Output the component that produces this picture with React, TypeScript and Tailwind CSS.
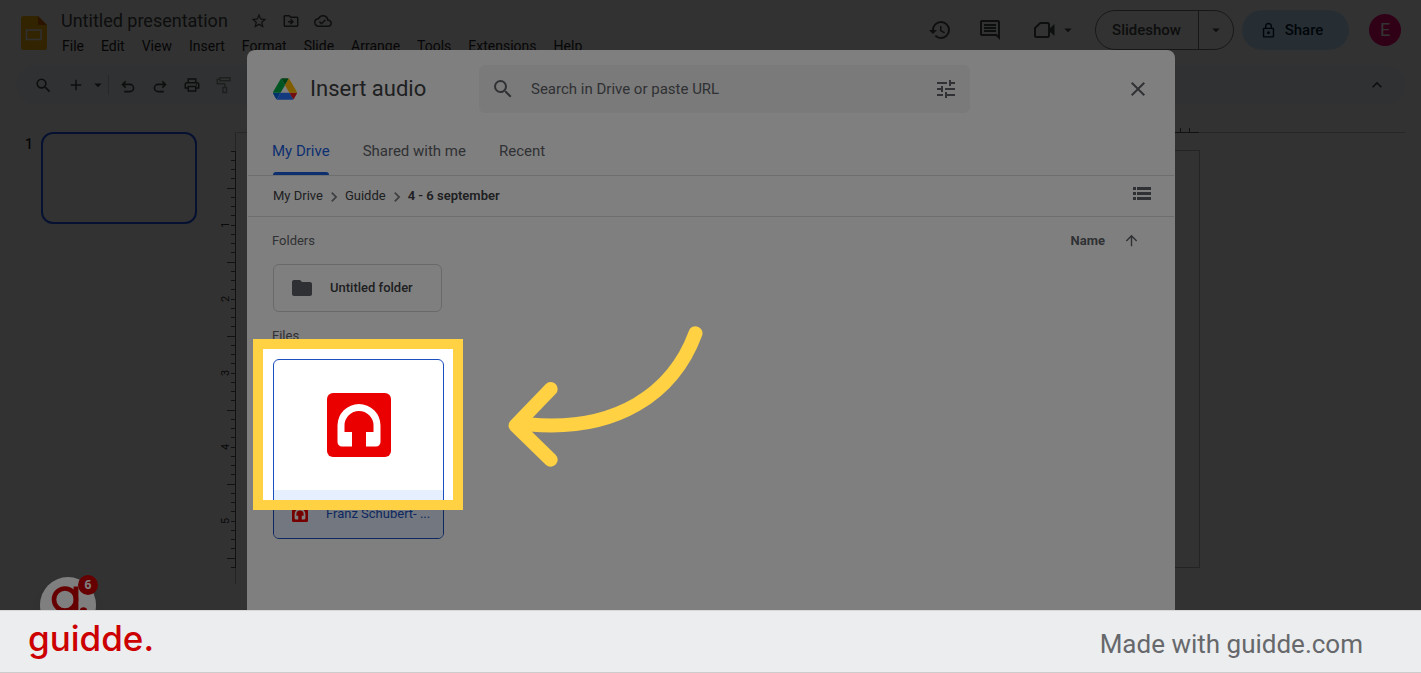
import React from "react";
import {
  MdAdd,
  MdArrowDropDown,
  MdArrowUpward,
  MdChevronRight,
  MdClose,
  MdFolder,
  MdHistory,
  MdKeyboardArrowUp,
  MdOutlineCloudDone,
  MdOutlineDriveFileMove,
  MdOutlineInsertComment,
  MdOutlineLock,
  MdOutlinePrint,
  MdSearch,
  MdStarBorder,
  MdTune,
} from "react-icons/md";

const menus = ["File", "Edit", "View", "Insert", "Format", "Slide", "Arrange", "Tools", "Extensions", "Help"];

function SlidesLogo() {
  return (
    <svg width="26" height="34" viewBox="0 0 26 34" aria-hidden="true">
      <path d="M2.500 0H17l9 9v22.500a2.500 2.500 0 0 1-2.500 2.500h-21A2.500 2.500 0 0 1 0 31.500v-29A2.500 2.500 0 0 1 2.500 0z" fill="#f9b300" />
      <path d="M17 0l9 9h-9z" fill="#d96b00" />
      <rect x="5.500" y="14" width="14.500" height="9.500" fill="none" stroke="#f1f1f1" strokeWidth="1.600" />
    </svg>
  );
}

function DriveLogo() {
  return (
    <svg width="24" height="22" viewBox="0 0 87.3 78" aria-hidden="true">
      <path d="m6.600 66.850 3.850 6.650c.8 1.400 1.950 2.500 3.300 3.300l13.750-23.800h-27.500c0 1.550.4 3.100 1.200 4.500z" fill="#0066da" />
      <path d="m43.650 25-13.750-23.800c-1.350.8-2.500 1.900-3.300 3.300l-25.400 44a9.060 9.060 0 0 0-1.200 4.500h27.500z" fill="#00ac47" />
      <path d="m73.550 76.800c1.350-.8 2.500-1.900 3.300-3.300l1.600-2.750 7.650-13.250c.8-1.400 1.200-2.950 1.200-4.500h-27.502l5.852 11.500z" fill="#ea1a20" />
      <path d="m43.650 25 13.750-23.800c-1.350-.8-2.900-1.200-4.500-1.200h-18.500c-1.600 0-3.150.45-4.500 1.200z" fill="#00832d" />
      <path d="m59.800 53h-32.300l-13.750 23.800c1.350.8 2.900 1.200 4.500 1.200h50.800c1.600 0 3.150-.45 4.500-1.200z" fill="#2674fc" />
      <path d="m73.400 26.500-12.700-22c-.8-1.400-1.950-2.500-3.300-3.300l-13.750 23.800 16.150 28h27.450c0-1.550-.4-3.100-1.200-4.500z" fill="#ffba00" />
    </svg>
  );
}

function UndoIcon({ flip = false }: { flip?: boolean }) {
  return (
    <svg
      width="14"
      height="14"
      viewBox="0 0 14 14"
      fill="none"
      stroke="currentColor"
      strokeWidth="1.600"
      className={flip ? "-scale-x-100" : ""}
      aria-hidden="true"
    >
      <path d="M4.700 1.200 1.500 4.400l3.200 3.200M1.700 4.400H9a3.600 3.600 0 0 1 0 7.200H3.200" />
    </svg>
  );
}

function PaintIcon() {
  return (
    <svg width="16" height="18" viewBox="0 0 16 18" fill="none" stroke="currentColor" strokeWidth="1.500" aria-hidden="true">
      <path d="M4 1.700h10v3H4zM4 3.200H1.200v4.600h7.600v3.400M7 11.500h3.500v5H7z" />
    </svg>
  );
}

function CameraIcon() {
  return (
    <svg width="21" height="18" viewBox="0 0 21 18" aria-hidden="true">
      <path d="M6.300 2H13.500Q15 2 15 3.500V14.500Q15 16 13.500 16H2.500Q1 16 1 14.500V7z" fill="none" stroke="currentColor" strokeWidth="2" strokeLinejoin="round" />
      <path d="M15.500 7.500 20.500 3v12l-5-4.500z" fill="currentColor" />
    </svg>
  );
}

function ListIcon() {
  return (
    <svg width="18" height="14" viewBox="0 0 18 14" fill="currentColor" aria-hidden="true">
      <path d="M0 0h3v3H0zM4 0h14v3H4zM0 5h3v3H0zM4 5h14v3H4zM0 10h3v3H0zM4 10h14v3H4z" />
    </svg>
  );
}

function AudioIcon({ size }: { size: number }) {
  return (
    <svg width={size} height={size} viewBox="0 0 64 64" aria-hidden="true">
      <rect width="64" height="64" rx="6" fill="#eb0000" />
      <path
        d="M10.500 32.500a21.500 21.500 0 0 1 43 0V49a4.500 4.500 0 0 1-4.500 4.500H39V39h7.500v-6.500a14.500 14.500 0 0 0-29 0V39H25v14.500H15a4.500 4.500 0 0 1-4.500-4.500z"
        fill="#fff"
      />
    </svg>
  );
}

function GuiddeEmblem() {
  return (
    <svg width="56" height="56" viewBox="0 0 56 56" fill="#cc0000" aria-hidden="true">
      <circle cx="25" cy="22.500" r="11" fill="none" stroke="#cc0000" strokeWidth="4.600" />
      <rect x="33.600" y="9.500" width="4.800" height="30" />
      <circle cx="43.500" cy="33.800" r="3.600" />
    </svg>
  );
}

function VerticalRuler() {
  const ticks = Array.from({ length: 46 }, (_, i) => i);
  return (
    <svg width="24" height="452" viewBox="0 0 24 452" className="shrink-0" aria-hidden="true">
      <path d="M22.500 0V452" stroke="#b4b4b4" />
      <path d="M22.500 19V435" stroke="#555" />
      {ticks.map((i) => {
        const y = Math.round(18.5 + i * 9.25) + 0.5;
        return <path key={i} d={i % 8 === 4 ? `M14 ${y}H23` : `M18 ${y}H23`} stroke="#555" />;
      })}
      {[1, 2, 3, 4, 5].map((n) => (
        <text
          key={n}
          x="12"
          y={19 + n * 74}
          fontSize="11"
          textAnchor="middle"
          dominantBaseline="central"
          fill="#333"
          transform={`rotate(-90 12 ${19 + n * 74})`}
        >
          {n}
        </text>
      ))}
    </svg>
  );
}

function Editor() {
  return (
    <div className="flex h-full flex-col bg-[#fbfbfb] text-[#2a2a2a]">
      <header className="flex h-[65px] items-start pt-2">
        <div className="ml-[21px] mt-2">
          <SlidesLogo />
        </div>
        <div className="ml-[14px]">
          <div className="flex h-[26px] items-center text-[#444746]">
            <h1 className="text-lg leading-6">Untitled presentation</h1>
            <button aria-label="Star" className="ml-[22px]"><MdStarBorder size={18} /></button>
            <button aria-label="Move" className="ml-[14px]"><MdOutlineDriveFileMove size={18} /></button>
            <button aria-label="Saved to Drive" className="ml-[14px]"><MdOutlineCloudDone size={18} /></button>
          </div>
          <nav className="flex h-6 items-center gap-[17px] pl-px text-sm text-[#1f1f1f]">
            {menus.map((m) => (
              <button key={m}>{m}</button>
            ))}
          </nav>
        </div>
        <div className="-mt-2 ml-auto flex h-[60px] items-center pr-5 text-[#444746]">
          <button aria-label="Version history"><MdHistory size={24} /></button>
          <button aria-label="Comments" className="ml-[26px]"><MdOutlineInsertComment size={24} /></button>
          <button aria-label="Video call" className="ml-8 flex items-center gap-1">
            <CameraIcon />
            <MdArrowDropDown size={18} />
          </button>
          <div className="ml-[18px] flex h-10 items-stretch rounded-full border border-[#747775]">
            <button className="pl-4 pr-[17px] text-[15px] font-medium">Slideshow</button>
            <button aria-label="Slideshow options" className="flex w-[35px] items-center justify-center border-l border-[#747775]">
              <MdArrowDropDown size={18} />
            </button>
          </div>
          <button className="ml-2 flex h-10 w-[107px] items-center justify-center gap-2 rounded-full bg-[#c2e7ff] pr-2 text-[15px] font-medium text-[#001d35]">
            <MdOutlineLock size={17} />
            Share
          </button>
          <div className="ml-5 flex size-8 items-center justify-center rounded-full bg-[#f00070] text-lg text-white">E</div>
        </div>
      </header>

      <div className="mx-4 flex h-10 shrink-0 items-center rounded-full bg-[#f0f4f9] text-[#444746]">
        <button aria-label="Search menus" className="ml-[18px]"><MdSearch size={19} /></button>
        <button aria-label="New slide" className="ml-[14px]"><MdAdd size={18} /></button>
        <button aria-label="New slide layout" className="ml-1"><MdArrowDropDown size={18} /></button>
        <div className="ml-px h-5 w-px bg-[#c7c7c7]" />
        <button aria-label="Undo" className="ml-3 mt-1"><UndoIcon /></button>
        <button aria-label="Redo" className="ml-[18px] mt-1"><UndoIcon flip /></button>
        <button aria-label="Print" className="ml-4"><MdOutlinePrint size={18} /></button>
        <button aria-label="Paint format" className="ml-[15px] text-[#999]"><PaintIcon /></button>
        <button aria-label="Hide the menus" className="ml-auto mr-[18px]"><MdKeyboardArrowUp size={20} /></button>
      </div>

      <div className="mt-[27px] flex flex-1 items-start">
        <aside className="flex w-[213px] shrink-0 gap-2 pl-[25px]">
          <span className="w-2 pt-[2px] text-sm font-medium leading-5 text-[#1f1f1f]">1</span>
          <div className="h-[92px] w-[156px] rounded-xl border-2 border-[#1f55f5]" />
        </aside>
        <VerticalRuler />
        <main className="relative mr-4 flex-1 border-t border-[#c4c4c4] pt-[17px]">
          <svg width="964" height="6" viewBox="0 0 964 6" className="absolute -top-[5px] left-0" aria-hidden="true">
            <path d="M221 4.500H962M943.500 0V4M952.500 0V4" stroke="#555" />
          </svg>
          <div className="ml-[221px] h-[418px] w-[742px] border border-[#b4b4b4]" />
        </main>
      </div>
    </div>
  );
}

function Pointer() {
  return (
    <svg
      width="196"
      height="142"
      viewBox="0 0 196 142"
      fill="none"
      stroke="#ffd143"
      strokeWidth="14"
      strokeLinecap="round"
      strokeLinejoin="round"
      className="pointer-events-none absolute -top-[33px] left-[235px]"
      aria-hidden="true"
    >
      <path d="M187.500 7.200C165 68 108 106 22 98.500" />
      <path d="M42.700 63 7.500 99.500 42.700 133.700" />
    </svg>
  );
}

function AudioCard() {
  return (
    <div className="relative w-[171px]">
      <button className="flex h-[180px] w-full flex-col overflow-hidden rounded-md border border-[#1a4fc0] bg-white">
        <span className="flex w-full flex-1 items-center justify-center">
          <AudioIcon size={64} />
        </span>
        <span className="flex h-12 w-full items-center bg-[#e6effe] pl-[18px] text-[#1a4fc0]">
          <AudioIcon size={16} />
          <span className="ml-[18px] text-[13px]">Franz Schubert- ...</span>
        </span>
      </button>
      <div className="pointer-events-none absolute -left-5 -top-5 h-[171px] w-[210px] border-10 border-[#ffd143] shadow-[0_0_0_3000px_rgba(0,0,0,0.5)]" />
      <Pointer />
    </div>
  );
}

function Picker() {
  return (
    <section role="dialog" aria-label="Insert audio" className="h-full w-[928px] shrink-0 rounded-t-lg bg-white text-[#3c4043]">
      <div className="flex h-[78px] items-center pl-[26px]">
        <DriveLogo />
        <h2 className="ml-[13px] w-[169px] text-[22px] leading-7">Insert audio</h2>
        <label className="flex h-12 w-[491px] items-center rounded-md bg-[#f4f4f4] px-3 text-[#5f6368]">
          <MdSearch size={24} />
          <input
            aria-label="Search in Drive or paste URL"
            placeholder="Search in Drive or paste URL"
            className="ml-4 flex-1 bg-transparent text-[15px] outline-none placeholder:text-[#5f6368]"
          />
          <MdTune size={24} />
        </label>
        <button aria-label="Close" className="ml-auto mr-[25px] text-[#5f6368]"><MdClose size={24} /></button>
      </div>

      <div role="tablist" className="mx-px flex h-12 gap-[33px] border-b border-[#dadce0] pl-6 text-[15px] text-[#5f6368]">
        <button role="tab" aria-selected="true" className="relative text-[#1a5fe0]">
          My Drive
          <span className="absolute inset-x-px bottom-0 h-[3px] rounded-t-sm bg-[#1a5fe0]" />
        </button>
        <button role="tab" aria-selected="false">Shared with me</button>
        <button role="tab" aria-selected="false">Recent</button>
      </div>

      <div className="mx-px flex h-[41px] items-center border-b border-[#dadce0] pl-[25px] text-[13px]">
        <a href="#my-drive">My Drive</a>
        <MdChevronRight size={20} className="mx-px mt-[2px] text-[#7a7d80]" />
        <a href="#guidde">Guidde</a>
        <MdChevronRight size={20} className="mx-px mt-[2px] text-[#7a7d80]" />
        <strong className="font-semibold">4 - 6 september</strong>
        <button aria-label="List view" className="mb-1 ml-auto mr-[23px] text-[#5f6068]"><ListIcon /></button>
      </div>

      <div className="px-[26px]">
        <div className="flex h-[47px] items-center justify-between text-[13px] text-[#5f6368]">
          <h3 className="-ml-px">Folders</h3>
          <button className="mr-[9px] flex items-center gap-[18px] font-bold">
            Name
            <MdArrowUpward size={17} />
          </button>
        </div>
        <button className="flex h-12 w-[169px] items-center rounded-md border border-[#d0d2d5] pl-4 text-[13px] font-medium">
          <MdFolder size={24} className="text-[#5f6068]" />
          <span className="ml-4">Untitled folder</span>
        </button>
        <h3 className="-ml-px flex h-[47px] items-center text-[13px] text-[#5f6368]">Files</h3>
        <AudioCard />
      </div>
    </section>
  );
}

export default function App() {
  return (
    <div className="flex h-screen flex-col font-[Roboto,'Liberation_Sans',sans-serif]">
      <div className="relative min-h-0 flex-1 overflow-hidden">
        <Editor />
        <div className="absolute inset-0 bg-black/60" />
        <button aria-label="Guidde, 6 notifications" className="absolute -bottom-[23px] left-10 size-14 rounded-full bg-white shadow-lg">
          <GuiddeEmblem />
          <span className="absolute -top-[2px] left-[38px] flex size-5 items-center justify-center rounded-full bg-[#cc0000] font-['Open_Sans',sans-serif] text-xs font-bold text-white">
            6
          </span>
        </button>
        <div className="absolute inset-0 flex justify-center pl-px pt-[50px]">
          <Picker />
        </div>
      </div>
      <footer className="flex h-[63px] shrink-0 items-center justify-between border-y border-t-[#d8d8da] border-b-[#cccccc] bg-[#ecedef] pl-7 pr-[58px]">
        <a href="#guidde-home" className="-mt-2 font-[Inter,sans-serif] text-[35px] font-medium leading-[48px] text-[#cc0000]">guidde.</a>
        <p className="pt-1 text-[26px] leading-8 text-[#66686b]">Made with guidde.com</p>
      </footer>
    </div>
  );
}
